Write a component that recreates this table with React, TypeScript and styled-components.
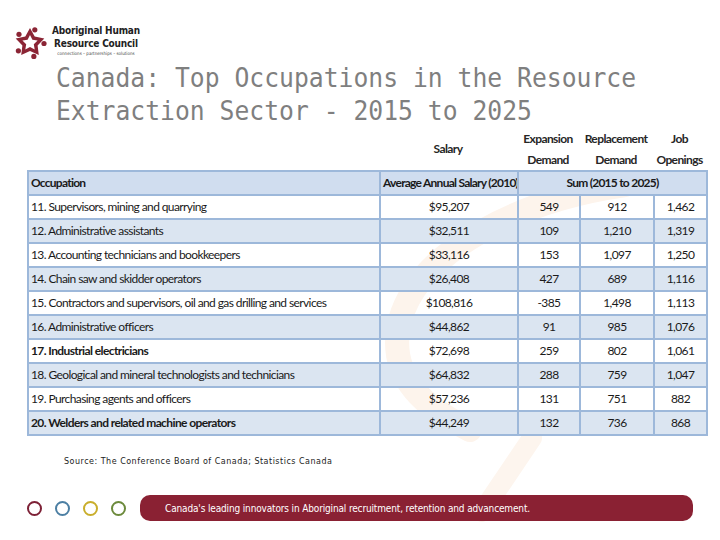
import styled, { createGlobalStyle } from 'styled-components';

const GlobalStyle = createGlobalStyle`
  html, body {
    margin: 0;
    padding: 0;
    background: #ffffff;
  }
`;

const Slide = styled.div`
  position: relative;
  width: 720px;
  height: 540px;
  overflow: hidden;
  background: #ffffff;
  font-family: Lato, 'Open Sans', sans-serif;
  color: #1a1a1a;
`;

const Watermark = styled.svg`
  position: absolute;
  left: 0;
  top: 0;
  z-index: 0;
  pointer-events: none;
`;

const Content = styled.div`
  position: relative;
  z-index: 1;
`;

const LogoBar = styled.div`
  height: 61px;
  box-sizing: border-box;
  padding: 24px 0 0 14px;
  display: flex;
  align-items: flex-start;
  gap: 5px;
`;

const LogoText = styled.div`
  display: flex;
  flex-direction: column;
  align-items: center;
  font-family: 'DejaVu Sans Condensed', 'DejaVu Sans', sans-serif;
  font-weight: bold;
  font-size: 10px;
  line-height: 13px;
  color: #222;
  letter-spacing: -0.2px;
`;

const Tagline = styled.span`
  font-size: 4.5px;
  line-height: 8px;
  font-weight: normal;
  letter-spacing: 0;
  color: #444;
`;

const Title = styled.h1`
  margin: 0;
  padding-left: 56px;
  font-family: 'DejaVu Sans Mono', monospace;
  font-weight: normal;
  font-size: 27px;
  line-height: 33px;
  color: #7f7f7f;
  transform: scaleX(0.915);
  transform-origin: 56px 0;
  white-space: nowrap;
`;

const LabelRow = styled.div`
  display: grid;
  grid-template-columns: 352px 138px 62px 74px 53px;
  margin-left: 27px;
  height: 43px;
  font-weight: bold;
  font-size: 12px;
  line-height: 21px;
  letter-spacing: -0.6px;
  color: #262626;
`;

const Label = styled.div`
  display: flex;
  flex-direction: column;
  justify-content: center;
  align-items: center;
  text-align: center;
`;

const Table = styled.table`
  margin-left: 27px;
  width: 679px;
  border-collapse: collapse;
  table-layout: fixed;
  font-size: 12px;
  letter-spacing: -0.6px;
`;

const HeadRow = styled.tr`
  height: 24px;
  background: #d0ddef;
`;

const Row = styled.tr<{ $shaded: boolean }>`
  height: 24px;
  background: ${(p) => (p.$shaded ? '#dbe5f1' : 'transparent')};
`;

const Cell = styled.td<{ $left?: boolean; $bold?: boolean }>`
  border: 2px solid #9db8da;
  padding: 0 2px;
  line-height: 1;
  text-align: ${(p) => (p.$left ? 'left' : 'center')};
  font-weight: ${(p) => (p.$bold ? 'bold' : 'normal')};
  white-space: nowrap;
  overflow: hidden;
`;

const HeadCell = styled(Cell).attrs({ as: 'th' })`
  letter-spacing: -0.75px;
`;

const Source = styled.div`
  margin: 21px 0 0 64px;
  font-family: 'DejaVu Sans', sans-serif;
  font-size: 8px;
  line-height: 10px;
  letter-spacing: 0.5px;
  color: #222;
`;

const Footer = styled.div`
  margin: 28px 0 0 27px;
  display: flex;
  align-items: center;
  height: 26px;
`;

const Rings = styled.div`
  display: flex;
  gap: 13px;
  margin-right: 14px;
`;

const Ring = styled.span<{ $color: string }>`
  width: 15px;
  height: 15px;
  box-sizing: border-box;
  border-radius: 50%;
  border: 2.5px solid ${(p) => p.$color};
`;

const Banner = styled.div`
  width: 553px;
  height: 26px;
  border-radius: 10px;
  background: #8a2133;
  color: #ffffff;
  display: flex;
  align-items: center;
  padding-left: 25px;
  box-sizing: border-box;
  font-family: 'DejaVu Sans Condensed', 'DejaVu Sans', sans-serif;
  font-size: 10px;
  letter-spacing: -0.15px;
`;

const rows = [
  ['11. Supervisors, mining and quarrying', '$95,207', '549', '912', '1,462'],
  ['12. Administrative assistants', '$32,511', '109', '1,210', '1,319'],
  ['13. Accounting technicians and bookkeepers', '$33,116', '153', '1,097', '1,250'],
  ['14. Chain saw and skidder operators', '$26,408', '427', '689', '1,116'],
  ['15. Contractors and supervisors, oil and gas drilling and services', '$108,816', '-385', '1,498', '1,113'],
  ['16. Administrative officers', '$44,862', '91', '985', '1,076'],
  ['17. Industrial electricians', '$72,698', '259', '802', '1,061'],
  ['18. Geological and mineral technologists and technicians', '$64,832', '288', '759', '1,047'],
  ['19. Purchasing agents and officers', '$57,236', '131', '751', '882'],
  ['20. Welders and related machine operators', '$44,249', '132', '736', '868'],
];

const boldRows = ['17', '20'];

function Logo() {
  // five linked figures round a white star
  const pts: string[] = [];
  const inner: string[] = [];
  for (let i = 0; i < 10; i++) {
    const a = -Math.PI / 2 + (i * Math.PI) / 5;
    const r = i % 2 === 0 ? 15 : 8;
    const ri = i % 2 === 0 ? 8 : 4;
    pts.push(`${(16 + r * Math.cos(a)).toFixed(1)},${(17 + r * Math.sin(a)).toFixed(1)}`);
    inner.push(`${(16 + ri * Math.cos(a)).toFixed(1)},${(17 + ri * Math.sin(a)).toFixed(1)}`);
  }
  const heads = [0, 1, 2, 3, 4].map((i) => {
    const a = -Math.PI / 2 + (i * 2 * Math.PI) / 5 + 0.35;
    return { x: 16 + 14 * Math.cos(a), y: 17 + 14 * Math.sin(a) };
  });
  return (
    <svg width="33" height="34" viewBox="0 0 33 34" style={{ marginTop: 2 }}>
      <path
        d={`M${pts.join(' L')} Z M${inner.join(' L')} Z`}
        fill="#8b2535"
        fillRule="evenodd"
      />
      {heads.map((h, i) => (
        <circle key={i} cx={h.x} cy={h.y} r="2.6" fill="#8b2535" />
      ))}
    </svg>
  );
}

export default function App() {
  return (
    <Slide>
      <GlobalStyle />
      <Watermark width="720" height="540">
        <path
          d="M625 185 C 520 200, 420 250, 400 320 C 385 380, 430 410, 470 430"
          stroke="#fdf4ec"
          strokeWidth="24"
          fill="none"
          strokeLinecap="round"
        />
        <path d="M532 438 L 482 512" stroke="#fdf5ee" strokeWidth="20" strokeLinecap="round" />
      </Watermark>
      <Content>
        <LogoBar>
          <Logo />
          <LogoText>
            <span>Aboriginal Human</span>
            <span>Resource Council</span>
            <Tagline>connections – partnerships – solutions</Tagline>
          </LogoText>
        </LogoBar>

        <Title>
          Canada: Top Occupations in the Resource
          <br />
          Extraction Sector - 2015 to 2025
        </Title>

        <LabelRow>
          <Label />
          <Label>Salary</Label>
          <Label>
            <span>Expansion</span>
            <span>Demand</span>
          </Label>
          <Label>
            <span>Replacement</span>
            <span>Demand</span>
          </Label>
          <Label>
            <span>Job</span>
            <span>Openings</span>
          </Label>
        </LabelRow>

        <Table>
          <colgroup>
            <col style={{ width: 352 }} />
            <col style={{ width: 138 }} />
            <col style={{ width: 62 }} />
            <col style={{ width: 74 }} />
            <col style={{ width: 53 }} />
          </colgroup>
          <thead>
            <HeadRow>
              <HeadCell $left $bold>Occupation</HeadCell>
              <HeadCell $bold>Average Annual Salary (2010)</HeadCell>
              <HeadCell $bold colSpan={3}>Sum (2015 to 2025)</HeadCell>
            </HeadRow>
          </thead>
          <tbody>
            {rows.map((r, i) => (
              <Row key={r[0]} $shaded={i % 2 === 1}>
                <Cell $left $bold={boldRows.includes(r[0].slice(0, 2))}>{r[0]}</Cell>
                <Cell>{r[1]}</Cell>
                <Cell>{r[2]}</Cell>
                <Cell>{r[3]}</Cell>
                <Cell>{r[4]}</Cell>
              </Row>
            ))}
          </tbody>
        </Table>

        <Source>Source: The Conference Board of Canada; Statistics Canada</Source>

        <Footer>
          <Rings>
            <Ring $color="#7d2136" />
            <Ring $color="#4c7fa3" />
            <Ring $color="#c9ae2c" />
            <Ring $color="#6c8a3c" />
          </Rings>
          <Banner>Canada's leading innovators in Aboriginal recruitment, retention and advancement.</Banner>
        </Footer>
      </Content>
    </Slide>
  );
}
